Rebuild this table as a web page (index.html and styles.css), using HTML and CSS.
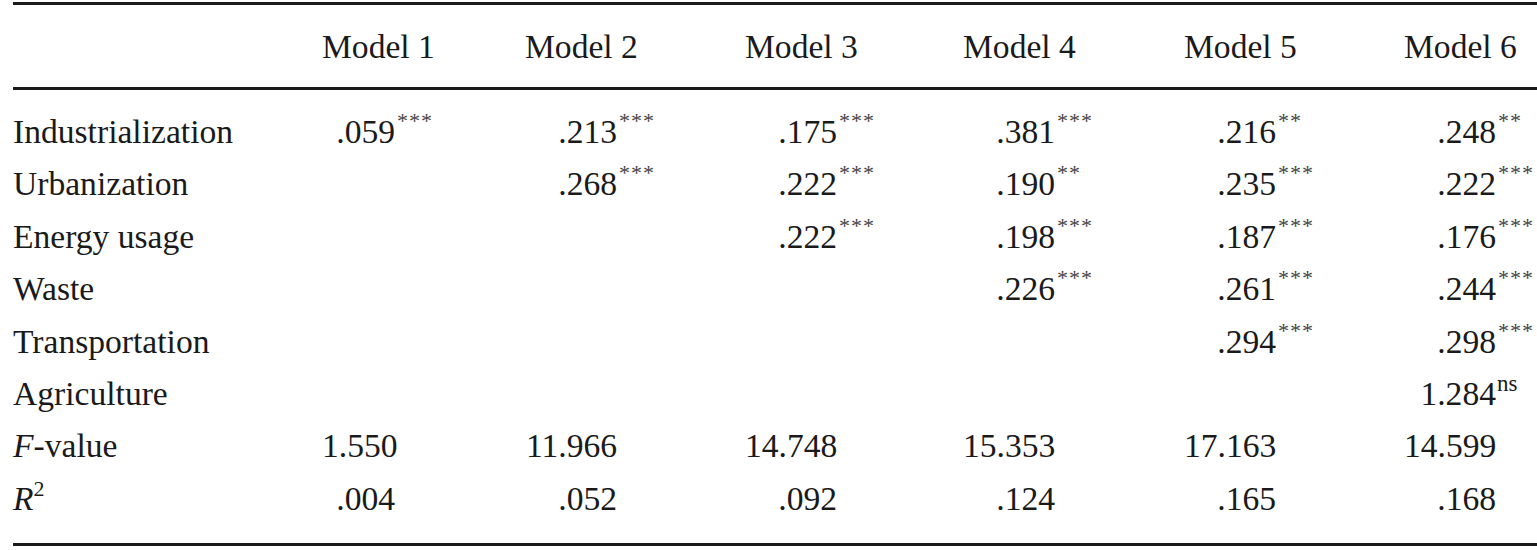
FILE: index.html
```html
<!DOCTYPE html>
<html lang="en">

<head>
	<meta charset="UTF-8">
	<meta name="viewport" content="width=device-width, initial-scale=1.0">
	<title>Regression models</title>
	<link rel="stylesheet" href="styles.css">
</head>

<body>
	<table class="results">
		<colgroup>
			<col class="colLabel">
			<col class="colM1">
			<col class="colM2">
			<col class="colM3">
			<col class="colM4">
			<col class="colM5">
			<col class="colM6">
		</colgroup>
		<thead>
			<tr>
				<th></th>
				<th>Model 1</th>
				<th>Model 2</th>
				<th>Model 3</th>
				<th>Model 4</th>
				<th>Model 5</th>
				<th>Model 6</th>
			</tr>
		</thead>
		<tbody>
			<tr class="first">
				<td>Industrialization</td>
				<td><span class="num">.059</span><sup class="sig">***</sup></td>
				<td><span class="num">.213</span><sup class="sig">***</sup></td>
				<td><span class="num">.175</span><sup class="sig">***</sup></td>
				<td><span class="num">.381</span><sup class="sig">***</sup></td>
				<td><span class="num">.216</span><sup class="sig">**</sup></td>
				<td><span class="num">.248</span><sup class="sig">**</sup></td>
			</tr>
			<tr>
				<td>Urbanization</td>
				<td></td>
				<td><span class="num">.268</span><sup class="sig">***</sup></td>
				<td><span class="num">.222</span><sup class="sig">***</sup></td>
				<td><span class="num">.190</span><sup class="sig">**</sup></td>
				<td><span class="num">.235</span><sup class="sig">***</sup></td>
				<td><span class="num">.222</span><sup class="sig">***</sup></td>
			</tr>
			<tr>
				<td>Energy usage</td>
				<td></td>
				<td></td>
				<td><span class="num">.222</span><sup class="sig">***</sup></td>
				<td><span class="num">.198</span><sup class="sig">***</sup></td>
				<td><span class="num">.187</span><sup class="sig">***</sup></td>
				<td><span class="num">.176</span><sup class="sig">***</sup></td>
			</tr>
			<tr>
				<td>Waste</td>
				<td></td>
				<td></td>
				<td></td>
				<td><span class="num">.226</span><sup class="sig">***</sup></td>
				<td><span class="num">.261</span><sup class="sig">***</sup></td>
				<td><span class="num">.244</span><sup class="sig">***</sup></td>
			</tr>
			<tr>
				<td>Transportation</td>
				<td></td>
				<td></td>
				<td></td>
				<td></td>
				<td><span class="num">.294</span><sup class="sig">***</sup></td>
				<td><span class="num">.298</span><sup class="sig">***</sup></td>
			</tr>
			<tr>
				<td>Agriculture</td>
				<td></td>
				<td></td>
				<td></td>
				<td></td>
				<td></td>
				<td><span class="num">1.284</span><sup class="ns">ns</sup></td>
			</tr>
			<tr>
				<td><i>F</i>-value</td>
				<td><span class="num">1.550</span></td>
				<td><span class="num">11.966</span></td>
				<td><span class="num">14.748</span></td>
				<td><span class="num">15.353</span></td>
				<td><span class="num">17.163</span></td>
				<td><span class="num">14.599</span></td>
			</tr>
			<tr class="last">
				<td><i>R</i><sup class="pow">2</sup></td>
				<td><span class="num">.004</span></td>
				<td><span class="num">.052</span></td>
				<td><span class="num">.092</span></td>
				<td><span class="num">.124</span></td>
				<td><span class="num">.165</span></td>
				<td><span class="num">.168</span></td>
			</tr>
		</tbody>
	</table>
</body>

</html>
```
FILE: styles.css
```css
body {
	margin: 0;
	background: #fff;
	color: #1a1a1a;
	font-family: "Liberation Serif", "Times New Roman", serif;
	font-size: 33.6px;
}

.results {
	margin: 2px 0 0 13px;
	width: 1524px;
	table-layout: fixed;
	border-collapse: separate;
	border-spacing: 0;
	border-top: 3px solid #1a1a1a;
	border-bottom: 3px solid #1a1a1a;
}

.colLabel { width: 309px; }
.colM1 { width: 203px; }
.colM2 { width: 220px; }
.colM3 { width: 218px; }
.colM4 { width: 221px; }
.colM5 { width: 220px; }
.colM6 { width: 133px; }

.results th,
.results td {
	padding: 0;
	text-align: left;
	font-weight: normal;
	line-height: 52.4px;
	white-space: nowrap;
	vertical-align: baseline;
}

.results th {
	padding: 16px 0 13.5px;
	border-bottom: 3px solid #1a1a1a;
}

.results tr.first td {
	padding-top: 16px;
}

.results tr.last td {
	padding-bottom: 18px;
}

.num {
	display: inline-block;
	width: 92px;
	text-align: right;
}

.results td:nth-child(2) .num {
	width: 73px;
}

.sig,
.ns,
.pow {
	line-height: 0;
}

.sig {
	margin-left: 2px;
	font-size: 22px;
	letter-spacing: 1px;
	vertical-align: 15px;
	color: #444;
}

.ns {
	margin-left: 1px;
	font-size: 23px;
	vertical-align: 14px;
}

.pow {
	font-size: 22px;
	vertical-align: 14px;
}
```
